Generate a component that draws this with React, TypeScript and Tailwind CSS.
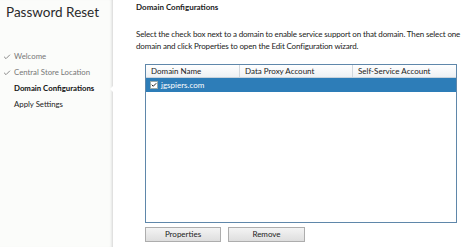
import { Check } from "lucide-react"

const font = { fontFamily: 'Lato, "Noto Sans", sans-serif' }

export default function App() {
  const steps = [
    { label: "Welcome", done: true },
    { label: "Central Store Location", done: true },
    { label: "Domain Configurations", current: true },
    { label: "Apply Settings" },
  ]

  return (
    <div className="flex h-[247px] w-[474px] overflow-hidden bg-white text-[#1e1e1e]" style={font}>
      {/* wizard steps */}
      <div className="relative flex w-[113px] shrink-0 flex-col bg-[#fbfcfa] shadow-[inset_-3px_0_3px_-2px_#d2d2d2]">
        <div className="whitespace-nowrap pl-[6px] pt-[1px] text-[13.5px] leading-[22px] text-[#2a2a2a]">Password Reset</div>
        <div className="mt-[26px] flex flex-col">
          {steps.map((s) => (
            <div key={s.label} className="relative flex h-[16px] items-center whitespace-nowrap text-[7.8px]">
              <span className="flex w-[14px] justify-center">
                {s.done && <Check className="h-[8px] w-[8px] text-[#8a8a8a]" strokeWidth={3} />}
              </span>
              <span className={s.current ? "font-bold text-[#111]" : s.done ? "text-[#777]" : "text-[#222]"}>
                {s.label}
              </span>
              {s.current && (
                <span className="absolute right-[-1px] top-[4px] h-0 w-0 border-y-[4px] border-r-[4px] border-y-transparent border-r-white" />
              )}
            </div>
          ))}
        </div>
      </div>

      {/* page */}
      <div className="flex min-w-0 flex-1 flex-col pl-[23px] pr-[10px]">
        <div className="pt-[1px] text-[8px] font-bold leading-[12px] text-[#222]">Domain Configurations</div>
        <p className="mt-[15px] whitespace-nowrap text-[8px] leading-[12px] tracking-[-0.15px] text-[#222]">
          Select the check box next to a domain to enable service support on that domain. Then select one
          <br />
          domain and click Properties to open the Edit Configuration wizard.
        </p>

        <div className="ml-[9px] mr-[7px] mt-[12px] flex h-[159px] flex-col border border-[#5f87aa] bg-white">
          <div className="flex h-[13px] border-b border-[#c9d3dc] bg-gradient-to-b from-white to-[#eef1f4] text-[8px] leading-[12px] text-[#222]">
            <div className="w-[94px] border-r border-[#d2d8de] pl-[5px]">Domain Name</div>
            <div className="w-[113px] border-r border-[#d2d8de] pl-[5px]">Data Proxy Account</div>
            <div className="flex-1 pl-[5px]">Self-Service Account</div>
          </div>
          <div className="flex h-[14px] items-center gap-[3px] bg-[#2d7db8] pl-[4px] text-[8px] text-white">
            <span className="flex h-[8px] w-[8px] items-center justify-center border border-[#9aa] bg-white">
              <Check className="h-[8px] w-[8px] text-[#222]" strokeWidth={4} />
            </span>
            jgspiers.com
          </div>
        </div>

        <div className="ml-[9px] mt-[4px] flex gap-[7px]">
          <button className="h-[15px] w-[76px] border border-[#adadad] bg-gradient-to-b from-[#f4f4f4] to-[#dedede] text-[8px] leading-[13px] text-[#222]">
            Properties
          </button>
          <button className="h-[15px] w-[77px] border border-[#adadad] bg-gradient-to-b from-[#f4f4f4] to-[#dedede] text-[8px] leading-[13px] text-[#222]">
            Remove
          </button>
        </div>
      </div>
    </div>
  )
}
